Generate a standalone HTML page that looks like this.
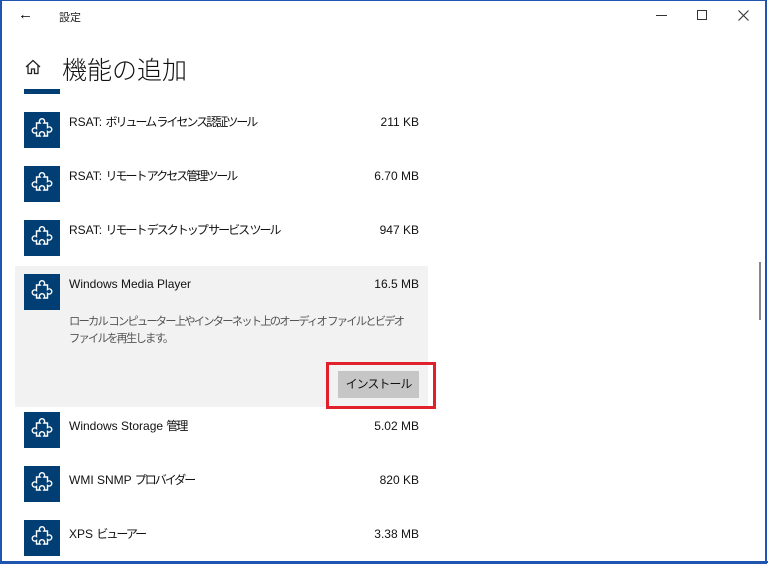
<!DOCTYPE html>
<html><head><meta charset="utf-8"><style>
*{margin:0;padding:0;box-sizing:border-box}
body{width:768px;height:565px;background:#fff;position:relative;overflow:hidden;font-family:"Liberation Sans","Noto Sans CJK JP",sans-serif;color:#000}
.win{position:absolute;left:0;top:0;width:767px;height:564px;border:2px solid #1f55b0;border-top-width:1px;background:#fff}
.abs{position:absolute}
.ic{position:absolute;left:24px;width:36px;height:36px;background:#003e73}
.ic svg{position:absolute;left:0;top:0}
.nm{position:absolute;left:69px;font-size:12px;line-height:16px;color:#111;white-space:nowrap}
.nm span{letter-spacing:-2px}
.sz{position:absolute;right:349px;font-size:12px;line-height:16px;color:#111}
</style></head><body>
<div class="win"></div>
<div class="abs" style="left:18px;top:6px;font-size:15px">&#8592;</div>
<div class="abs" style="left:59px;top:9px;font-size:11px;color:#222">設定</div>
<div class="abs" style="left:656px;top:15px;width:11px;height:1px;background:#333"></div>
<div class="abs" style="left:697px;top:10px;width:10px;height:10px;border:1px solid #333"></div>
<svg class="abs" style="left:738px;top:10px" width="11" height="11"><path d="M0.5 0.5L10.5 10.5M10.5 0.5L0.5 10.5" stroke="#333" stroke-width="1.1"/></svg>
<svg class="abs" style="left:25px;top:59px" width="16" height="16" viewBox="0 0 16 16"><path d="M1 8 L8 1.5 L15 8 M3 6.5 V14.5 H6.5 V10 H9.5 V14.5 H13 V6.5" fill="none" stroke="#222" stroke-width="1.3"/></svg>
<div class="abs" style="left:62px;top:51px;font-size:25px;color:#111;font-weight:300">機能の追加</div>
<div class="abs" style="left:24px;top:89px;width:36px;height:5px;background:#003e73"></div>
<div class="abs" style="left:15px;top:266px;width:413px;height:141px;background:#f2f2f2"></div>
<div class="abs" style="left:759px;top:262px;width:2px;height:58px;background:#888"></div>

<div class="ic" style="top:112px"><svg width="36" height="36"><path id="p" d="M14 10h3.5a2.6 2.6 0 1 1 4 0H25v4.5a2.6 2.6 0 1 1 0 4V23h-3.5a2.6 2.6 0 1 0-4 0H14v-3.5a2.6 2.6 0 1 1 0-4z" fill="none" stroke="#fff" stroke-width="1.4" transform="translate(-1.5 1)"/></svg></div>
<div class="nm" style="top:114px">RSAT: <span>ボリューム ライセンス認証ツール</span></div><div class="sz" style="top:114px">211 KB</div>

<div class="ic" style="top:166px"><svg width="36" height="36"><use href="#p"/></svg></div>
<div class="nm" style="top:168px">RSAT: <span>リモート アクセス管理ツール</span></div><div class="sz" style="top:168px">6.70 MB</div>

<div class="ic" style="top:220px"><svg width="36" height="36"><use href="#p"/></svg></div>
<div class="nm" style="top:222px">RSAT: <span>リモート デスクトップ サービス ツール</span></div><div class="sz" style="top:222px">947 KB</div>

<div class="ic" style="top:274px"><svg width="36" height="36"><use href="#p"/></svg></div>
<div class="nm" style="top:276px">Windows Media Player</div><div class="sz" style="top:276px">16.5 MB</div>
<div class="abs" style="left:69px;top:314px;font-size:11.3px;color:#555;line-height:17px;white-space:nowrap;letter-spacing:-1.8px">ローカル コンピューター上やインターネット上のオーディオ ファイルとビデオ<br>ファイルを再生します。</div>
<div class="abs" style="left:326px;top:362px;width:110px;height:47px;border:3px solid #e0202a"></div>
<div class="abs" style="left:338px;top:371px;width:81px;height:27px;background:#c6c6c6;font-size:12px;text-align:center;line-height:27px;color:#111;letter-spacing:-1px">インストール</div>

<div class="ic" style="top:412px"><svg width="36" height="36"><use href="#p"/></svg></div>
<div class="nm" style="top:418px">Windows Storage <span>管理</span></div><div class="sz" style="top:418px">5.02 MB</div>

<div class="ic" style="top:466px"><svg width="36" height="36"><use href="#p"/></svg></div>
<div class="nm" style="top:472px">WMI SNMP <span>プロバイダー</span></div><div class="sz" style="top:472px">820 KB</div>

<div class="ic" style="top:520px"><svg width="36" height="36"><use href="#p"/></svg></div>
<div class="nm" style="top:526px">XPS <span>ビューアー</span></div><div class="sz" style="top:526px">3.38 MB</div>
<div class="abs" style="left:0;top:561px;width:768px;height:2px;background:#1f55b0"></div>
</body></html>
